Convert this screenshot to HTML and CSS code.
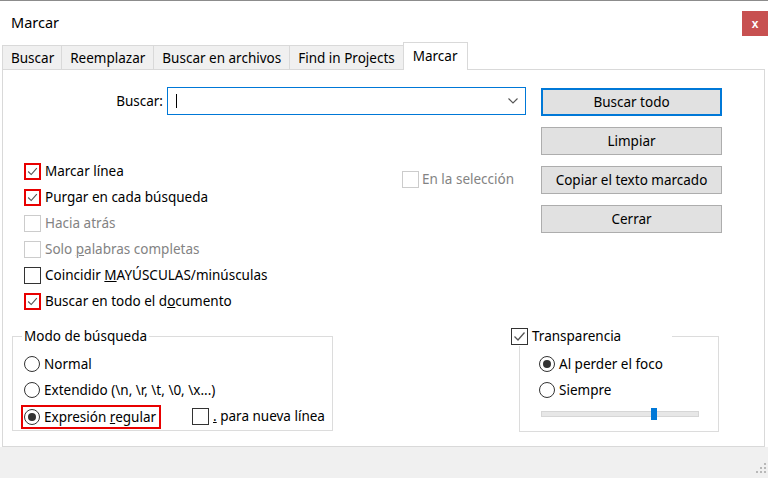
FILE: index.html
```html
<!DOCTYPE html>
<html lang="es">
<head>
    <meta charset="UTF-8">
    <title>Marcar</title>
    <link rel="stylesheet" href="styles.css">
</head>
<body>
    <div class="window">
        <div class="titlebar">
            <span class="title">Marcar</span>
            <button class="close">x</button>
        </div>
        <div class="tabs">
            <div class="tab">Buscar</div>
            <div class="tab">Reemplazar</div>
            <div class="tab">Buscar en archivos</div>
            <div class="tab">Find in Projects</div>
            <div class="tab active">Marcar</div>
        </div>
        <div class="panel">
            <div class="top">
                <div class="left-col">
                    <div class="search-row">
                        <label class="search-label">Buscar:</label>
                        <div class="combo">
                            <span class="caret"></span>
                            <svg class="chevron" width="10" height="6" viewBox="0 0 10 6"><polyline points="0.5,0.5 5,5 9.5,0.5" fill="none" stroke="#555" stroke-width="1.1"/></svg>
                        </div>
                    </div>
                    <div class="options">
                        <div class="checklist">
                            <div class="opt"><span class="cb red"><svg viewBox="0 0 15 15"><path d="M2.5 7.5 L6 11 L12.5 3.5"/></svg></span><span>Marcar línea</span></div>
                            <div class="opt"><span class="cb red"><svg viewBox="0 0 15 15"><path d="M2.5 7.5 L6 11 L12.5 3.5"/></svg></span><span>Purgar en cada búsqueda</span></div>
                            <div class="opt disabled"><span class="cb"></span><span>Hacia atrás</span></div>
                            <div class="opt disabled"><span class="cb"></span><span>Solo <u>p</u>alabras completas</span></div>
                            <div class="opt"><span class="cb"></span><span>Coincidir <u>M</u>AYÚSCULAS/minúsculas</span></div>
                            <div class="opt"><span class="cb red"><svg viewBox="0 0 15 15"><path d="M2.5 7.5 L6 11 L12.5 3.5"/></svg></span><span>Buscar en todo el d<u>o</u>cumento</span></div>
                        </div>
                        <div class="opt disabled en-sel"><span class="cb"></span><span>En la selección</span></div>
                    </div>
                </div>
                <div class="btn-col">
                    <button class="btn default">Buscar todo</button>
                    <button class="btn">Limpiar</button>
                    <button class="btn">Copiar el texto marcado</button>
                    <button class="btn">Cerrar</button>
                </div>
            </div>
            <div class="groups">
                <div class="group mode">
                    <div class="group-title">Modo de búsqueda</div>
                    <div class="opt"><span class="radio"></span><span>Normal</span></div>
                    <div class="opt"><span class="radio"></span><span>Extendido (\n, \r, \t, \0, \x...)</span></div>
                    <div class="opt">
                        <span class="hl"><span class="radio on"></span><span>Expresión <u>r</u>egular</span></span>
                        <span class="newline"><span class="cb"></span><span><u>.</u> para nueva línea</span></span>
                    </div>
                </div>
                <div class="group transp">
                    <div class="group-title"><span class="cb"><svg viewBox="0 0 15 15"><path d="M2.5 7.5 L6 11 L12.5 3.5"/></svg></span><span>Transparencia</span></div>
                    <div class="opt"><span class="radio on"></span><span>Al perder el foco</span></div>
                    <div class="opt"><span class="radio"></span><span>Siempre</span></div>
                    <div class="slider"><span class="thumb"></span></div>
                </div>
            </div>
        </div>
        <div class="footer">
            <svg width="12" height="12" viewBox="0 0 12 12" fill="#b8b8b8">
                <rect x="9" y="0" width="2" height="2"/>
                <rect x="5" y="4" width="2" height="2"/><rect x="9" y="4" width="2" height="2"/>
                <rect x="1" y="8" width="2" height="2"/><rect x="5" y="8" width="2" height="2"/><rect x="9" y="8" width="2" height="2"/>
            </svg>
        </div>
    </div>
</body>
</html>
```

FILE: styles.css
```css
* {
    box-sizing: border-box;
}
body {
    margin: 0;
    font-family: "Noto Sans", sans-serif;
    font-size: 13.5px;
    color: #000;
    background-color: #fff;
}
.window {
    width: 768px;
    height: 478px;
    border-top: 1px solid #8c8c8c;
    display: flex;
    flex-direction: column;
    overflow: hidden;
}
.titlebar {
    height: 41px;
    display: flex;
    justify-content: space-between;
    align-items: flex-start;
}
.title {
    font-size: 14.5px;
    line-height: 20px;
    margin: 11px 0 0 11px;
}
.close {
    width: 26px;
    height: 25px;
    margin-top: 10px;
    padding: 0;
    border: none;
    background-color: #c75050;
    color: #fff;
    font: bold 12px "Liberation Sans", sans-serif;
}
.tabs {
    height: 28px;
    display: flex;
    align-items: flex-end;
    padding-left: 2px;
    margin-bottom: -1px;
    position: relative;
    z-index: 1;
}
.tab {
    height: 24px;
    margin-bottom: 1px;
    padding: 2px 8px 0;
    line-height: 20px;
    background-color: #f0f0f0;
    border-top: 1px solid #d9d9d9;
    border-left: 1px solid #d9d9d9;
}
.tab:first-child {
    padding: 2px 7px 0 8px;
}
.tab.active {
    height: 28px;
    margin-bottom: 0;
    padding: 3px 9px 0;
    background-color: #fff;
    border-right: 1px solid #d9d9d9;
}
.panel {
    margin-left: 2px;
    width: 763px;
    height: 378px;
    border: 1px solid #d9d9d9;
    background-color: #fff;
}
.top {
    display: flex;
}
.left-col {
    width: 523px;
}
.search-row {
    display: flex;
    align-items: center;
    gap: 4px;
    height: 28px;
    margin-top: 17px;
}
.search-label {
    width: 160px;
    text-align: right;
}
.combo {
    width: 359px;
    height: 28px;
    border: 1px solid #0078d7;
    display: flex;
    align-items: center;
    justify-content: space-between;
    padding: 0 7px 0 8px;
}
.caret {
    width: 1px;
    height: 14px;
    background-color: #000;
}
.options {
    display: grid;
    grid-template-columns: 399px auto;
    margin-top: 43px;
}
.checklist {
    padding-left: 21px;
}
.opt {
    display: flex;
    align-items: center;
    gap: 4px;
    height: 26px;
    line-height: 20px;
    white-space: nowrap;
}
.opt.disabled {
    color: #838383;
}
.en-sel {
    margin-top: 8px;
    gap: 3px;
}
.cb {
    width: 17px;
    height: 17px;
    flex: none;
    border: 1px solid #333;
    background-color: #fff;
    display: flex;
}
.cb.red {
    border: 2px solid #e80000;
}
.disabled .cb {
    border-color: #cccccc;
}
.cb svg {
    width: 100%;
    height: 100%;
}
.cb path {
    fill: none;
    stroke: #555;
    stroke-width: 1.3;
}
.radio {
    width: 16px;
    height: 16px;
    flex: none;
    border: 1px solid #333;
    border-radius: 50%;
    display: flex;
    align-items: center;
    justify-content: center;
}
.radio.on::after {
    content: "";
    width: 8px;
    height: 8px;
    border-radius: 50%;
    background-color: #333;
}
.btn-col {
    width: 181px;
    margin-left: 15px;
    padding-top: 18px;
    display: flex;
    flex-direction: column;
    gap: 11px;
}
.btn {
    height: 28px;
    padding: 0;
    border: 1px solid #adadad;
    background-color: #e1e1e1;
    font: inherit;
    color: #000;
}
.btn.default {
    border: 2px solid #0078d7;
}
.groups {
    display: flex;
    align-items: flex-start;
    margin-top: 22px;
}
.group {
    border: 1px solid #dcdcdc;
}
.group-title {
    width: fit-content;
    height: 20px;
    line-height: 20px;
    margin: -11px 0 5px 9px;
    padding: 0 2px;
    background-color: #fff;
    display: flex;
    align-items: center;
    gap: 4px;
    white-space: nowrap;
}
.mode {
    width: 321px;
    margin-left: 9px;
    padding-bottom: 1px;
}
.mode .opt {
    padding-left: 11px;
}
.hl {
    display: flex;
    align-items: center;
    gap: 4px;
    height: 24px;
    margin: 2px 0 0 -3px;
    padding: 0 3px 0 1px;
    border: 2px solid #e80000;
}
.newline {
    display: flex;
    align-items: center;
    gap: 4px;
    margin-left: 27px;
}
.transp {
    width: 200px;
    margin-left: 186px;
    padding: 0 0 11px 19px;
}
.transp .group-title {
    width: 161px;
    margin-left: -28px;
    padding: 0;
}
.slider {
    width: 158px;
    height: 6px;
    margin: 8px 0 3px 2px;
    background-color: #e7e7e7;
    border: 1px solid #d6d6d6;
    display: flex;
    align-items: center;
}
.thumb {
    width: 6px;
    height: 12px;
    margin-left: 109px;
    flex: none;
    background-color: #0078d7;
}
.footer {
    flex: 1;
    background-color: #f0f0f0;
    display: flex;
    justify-content: flex-end;
    align-items: flex-end;
    padding: 0 1px 3px 0;
}
```
